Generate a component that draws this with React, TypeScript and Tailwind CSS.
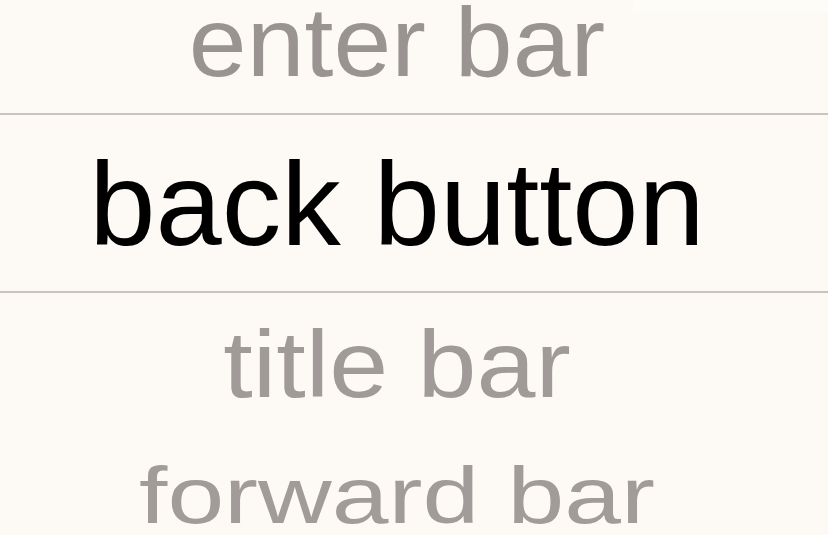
export default function App() {
  const font = { fontFamily: '"Liberation Sans", Arial, sans-serif' };
  return (
    <div
      className="relative w-[828px] h-[535px] overflow-hidden bg-[#fdf9f5] flex flex-col items-center"
      style={font}
    >
      {/* faint status strip in the corner */}
      <div className="absolute top-0 right-0 w-[195px] h-[12px] bg-[#fefcf9]" />

      {/* item above the selection */}
      <div className="h-[113px] shrink-0 w-full pr-[34px] flex flex-col items-center">
        <span className="block -mt-[8px] text-[104px] leading-none text-[#999391] origin-top scale-y-[0.95] whitespace-nowrap">
          enter bar
        </span>
      </div>

      <div className="h-[2px] shrink-0 w-full bg-[#cbc3bf]" />

      {/* selected item */}
      <div className="h-[176px] shrink-0 w-full pr-[34px] flex flex-col items-center">
        <span className="block mt-[29px] text-[119px] leading-none text-black whitespace-nowrap">
          back button
        </span>
      </div>

      <div className="h-[2px] shrink-0 w-full bg-[#cbc3bf]" />

      {/* items below the selection */}
      <div className="flex-1 w-full pr-[34px] flex flex-col items-center">
        <span className="block shrink-0 mt-[23px] text-[106px] leading-none text-[#a09a98] origin-top scale-y-[0.9] whitespace-nowrap">
          title bar
        </span>
        <span className="block shrink-0 mt-[34px] text-[102px] leading-none text-[#a19b99] origin-top scale-y-[0.78] whitespace-nowrap">
          forward bar
        </span>
      </div>
    </div>
  );
}
